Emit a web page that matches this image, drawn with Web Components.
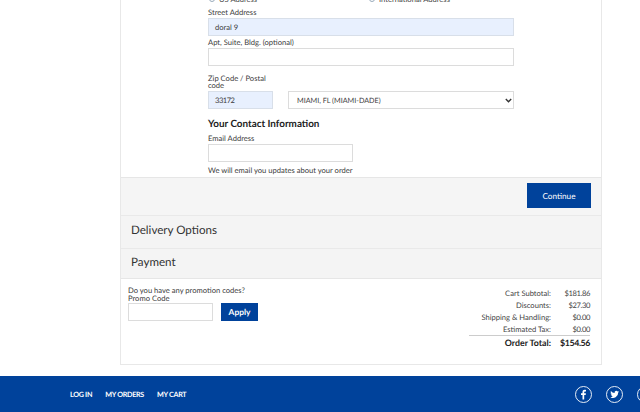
<!DOCTYPE html>
<html>
<head>
<meta charset="utf-8">
<style>
  html, body { margin: 0; padding: 0; background: #fff; overflow: hidden; }
  body { font-family: Lato, "Noto Sans", sans-serif; color: #333; height: 412px; text-rendering: geometricPrecision; }
</style>
</head>
<body>
<checkout-page></checkout-page>

<script>
class FormField extends HTMLElement {
  constructor() {
    super();
    this.attachShadow({ mode: "open" });
  }

  connectedCallback() {
    const width = this.getAttribute("width") || "100%";
    const value = this.getAttribute("value") || "";
    const filled = value ? "filled" : "";
    this.shadowRoot.innerHTML = `
      <style>
        :host { display: block; width: ${width}; font-size: 7.6px; line-height: 7.5px; color: #3c3c3c; }
        .label { display: block; }
        .box {
          box-sizing: border-box;
          height: 18px;
          margin-top: 1.5px;
          padding-left: 6px;
          border: 1px solid #dcdcdc;
          background: #fff;
          line-height: 16px;
        }
        .box.filled { background: #e8f0fe; border-color: #d8dfe9; }
        :host([digits]) .box { letter-spacing: -.5px; }
      </style>
      <span class="label"><slot></slot></span>
      <div class="box ${filled}">${value}</div>
    `;
  }
}

class SummaryRow extends HTMLElement {
  constructor() {
    super();
    this.attachShadow({ mode: "open" });
  }

  connectedCallback() {
    this.shadowRoot.innerHTML = `
      <style>
        :host { display: flex; justify-content: flex-end; height: 12px; line-height: 12px; font-size: 7.6px; color: #444; }
        :host([total]) { font-size: 8.8px; font-weight: 700; color: #222; height: 14px; line-height: 14px; border-top: 1px solid #ccc; }
        .amount { width: 39px; text-align: right; letter-spacing: -.4px; }
      </style>
      <span><slot></slot></span>
      <span class="amount">${this.getAttribute("amount")}</span>
    `;
  }
}

class PanelHeader extends HTMLElement {
  constructor() {
    super();
    this.attachShadow({ mode: "open" });
  }

  connectedCallback() {
    this.shadowRoot.innerHTML = `
      <style>
        :host {
          display: flex;
          align-items: center;
          box-sizing: border-box;
          padding-left: 10px;
          background: #f4f4f4;
          border-top: 1px solid #e9e9e9;
          font-size: 11.6px;
          color: #333;
        }
      </style>
      <slot></slot>
    `;
  }
}

class SiteFooter extends HTMLElement {
  constructor() {
    super();
    this.attachShadow({ mode: "open" });
  }

  connectedCallback() {
    this.shadowRoot.innerHTML = `
      <style>
        :host {
          display: flex;
          align-items: center;
          box-sizing: border-box;
          height: 36px;
          padding-left: 70px;
          background: #00429b;
          color: #fff;
          overflow: hidden;
          font-size: 7.2px;
          font-weight: 700;
          letter-spacing: -.3px;
        }
        nav { display: flex; gap: 13px; }
        .social { display: flex; gap: 14px; margin-left: auto; margin-right: -14px; }
        svg { width: 17px; height: 17px; display: block; fill: none; stroke: #fff; stroke-width: .9; }
      </style>
      <nav><span>LOG IN</span><span>MY ORDERS</span><span>MY CART</span></nav>
      <div class="social">
        <svg viewBox="0 0 17 17"><circle cx="8.5" cy="8.5" r="8"/><path d="M9.2 13.5V9h1.500l.2-1.700H9.200V6.200c0-.5.2-.8.8-.8h1V3.900c-.3 0-.8-.1-1.300-.1-1.300 0-2.200.8-2.200 2.200v1.300H6V9h1.500v4.500z" fill="#fff" stroke="none"/></svg>
        <svg viewBox="0 0 17 17"><circle cx="8.5" cy="8.5" r="8"/><path d="M13 5.600c-.3.150-.7.250-1 .3.400-.2.650-.55.800-.95-.35.200-.7.350-1.150.45a1.800 1.800 0 0 0-3.050 1.650A5.100 5.100 0 0 1 4.900 5.100a1.800 1.800 0 0 0 .55 2.400c-.3 0-.55-.1-.8-.2 0 .9.600 1.600 1.450 1.800-.25.050-.5.100-.8.050.2.700.9 1.250 1.700 1.250A3.600 3.600 0 0 1 4.300 11.150a5.100 5.100 0 0 0 7.850-4.500c.35-.25.650-.6.850-1.050z" fill="#fff" stroke="none"/></svg>
        <svg viewBox="0 0 17 17"><circle cx="8.5" cy="8.5" r="8"/></svg>
      </div>
    `;
  }
}

class CheckoutPage extends HTMLElement {
  constructor() {
    super();
    this.attachShadow({ mode: "open" });
  }

  connectedCallback() {
    this.shadowRoot.innerHTML = `
      <style>
        :host { display: block; margin-top: -7px; }
        .card {
          box-sizing: border-box;
          width: 482px;
          height: 372px;
          margin-left: 120px;
          border: 1px solid #e8e8e8;
          border-top: 0;
        }
        .form { height: 184px; box-sizing: border-box; padding-left: 87px; font-size: 7.6px; }
        .fields { width: 306px; }
        .radios { display: flex; height: 12px; line-height: 12px; font-size: 7.6px; color: #444; }
        .radios span { flex: none; width: 160px; }
        .radios i { display: inline-block; width: 4px; height: 4px; border-radius: 50%; border: 1px solid #9ab; margin: 0 4px 0 1px; }
        .street { margin-top: 4px; }
        .apt { margin-top: 3px; }
        .zip-row { display: flex; gap: 15px; align-items: flex-end; margin-top: 8.5px; }
        .state { position: relative; flex: 1; display: flex; }
        select {
          flex: 1;
          appearance: none;
          box-sizing: border-box;
          height: 18px;
          padding-left: 8px;
          border: 1px solid #dcdcdc;
          border-radius: 0;
          background: #fff;
          font: 7.2px Lato, sans-serif;
          text-rendering: geometricPrecision;
          color: #3c3c3c;
        }
        .state svg { position: absolute; right: 2px; top: 7px; width: 7px; height: 5px; fill: none; stroke: #333; stroke-width: 1.4; }
        h3 { margin: 9px 0 5px; font-size: 9.9px; line-height: 12px; font-weight: 700; color: #222; }
        .note { margin-top: 2.5px; line-height: 10px; color: #3c3c3c; }
        .actions {
          display: flex;
          justify-content: flex-end;
          box-sizing: border-box;
          height: 38px;
          padding: 5px 10px 0 0;
          background: #f5f5f5;
          border-top: 1px solid #e6e6e6;
        }
        button {
          border: 0;
          border-radius: 0;
          background: #00429b;
          color: #fff;
          font-family: Lato, sans-serif;
          text-rendering: geometricPrecision;
        }
        .continue { width: 64px; height: 25px; font-size: 8.2px; }
        .delivery { height: 33px; padding-bottom: 4px; }
        .payment { height: 31px; padding-bottom: 2px; border-bottom: 1px solid #e6e6e6; }
        .bottom { display: flex; justify-content: space-between; padding: 8px 11px 0 7px; }
        .promo { font-size: 7.6px; line-height: 7.5px; color: #3c3c3c; }
        .promo-row { display: flex; gap: 8px; margin-top: 1px; }
        .promo-row div { box-sizing: border-box; width: 85px; height: 18px; border: 1px solid #dcdcdc; }
        .apply { width: 37px; height: 18px; font-size: 8.4px; font-weight: 700; }
        .summary { width: 121px; }
        site-footer { margin-top: 11px; }
      </style>
      <div class="card">
        <div class="form">
          <div class="fields">
            <div class="radios">
              <span><i></i>US Address</span><span><i></i>International Address</span>
            </div>
            <form-field class="street" value="doral 9">Street Address</form-field>
            <form-field class="apt">Apt, Suite, Bldg. (optional)</form-field>
            <div class="zip-row">
              <form-field width="65px" value="33172" digits>Zip Code / Postal code</form-field>
              <div class="state">
                <select><option>MIAMI, FL (MIAMI-DADE)</option></select>
                <svg viewBox="0 0 7 5"><path d="M.8 1l2.700 2.700L6.200 1"/></svg>
              </div>
            </div>
            <h3>Your Contact Information</h3>
            <form-field width="145px">Email Address</form-field>
            <div class="note">We will email you updates about your order</div>
          </div>
        </div>
        <div class="actions"><button class="continue">Continue</button></div>
        <panel-header class="delivery">Delivery Options</panel-header>
        <panel-header class="payment">Payment</panel-header>
        <div class="bottom">
          <div class="promo">
            Do you have any promotion codes?<br>Promo Code
            <div class="promo-row"><div></div><button class="apply">Apply</button></div>
          </div>
          <div class="summary">
            <summary-row amount="$181.86">Cart Subtotal:</summary-row>
            <summary-row amount="$27.30">Discounts:</summary-row>
            <summary-row amount="$0.00">Shipping &amp; Handling:</summary-row>
            <summary-row amount="$0.00">Estimated Tax:</summary-row>
            <summary-row amount="$154.56" total>Order Total:</summary-row>
          </div>
        </div>
      </div>
      <site-footer></site-footer>
    `;
  }
}

customElements.define("form-field", FormField);
customElements.define("summary-row", SummaryRow);
customElements.define("panel-header", PanelHeader);
customElements.define("site-footer", SiteFooter);
customElements.define("checkout-page", CheckoutPage);
</script>
</body>
</html>
